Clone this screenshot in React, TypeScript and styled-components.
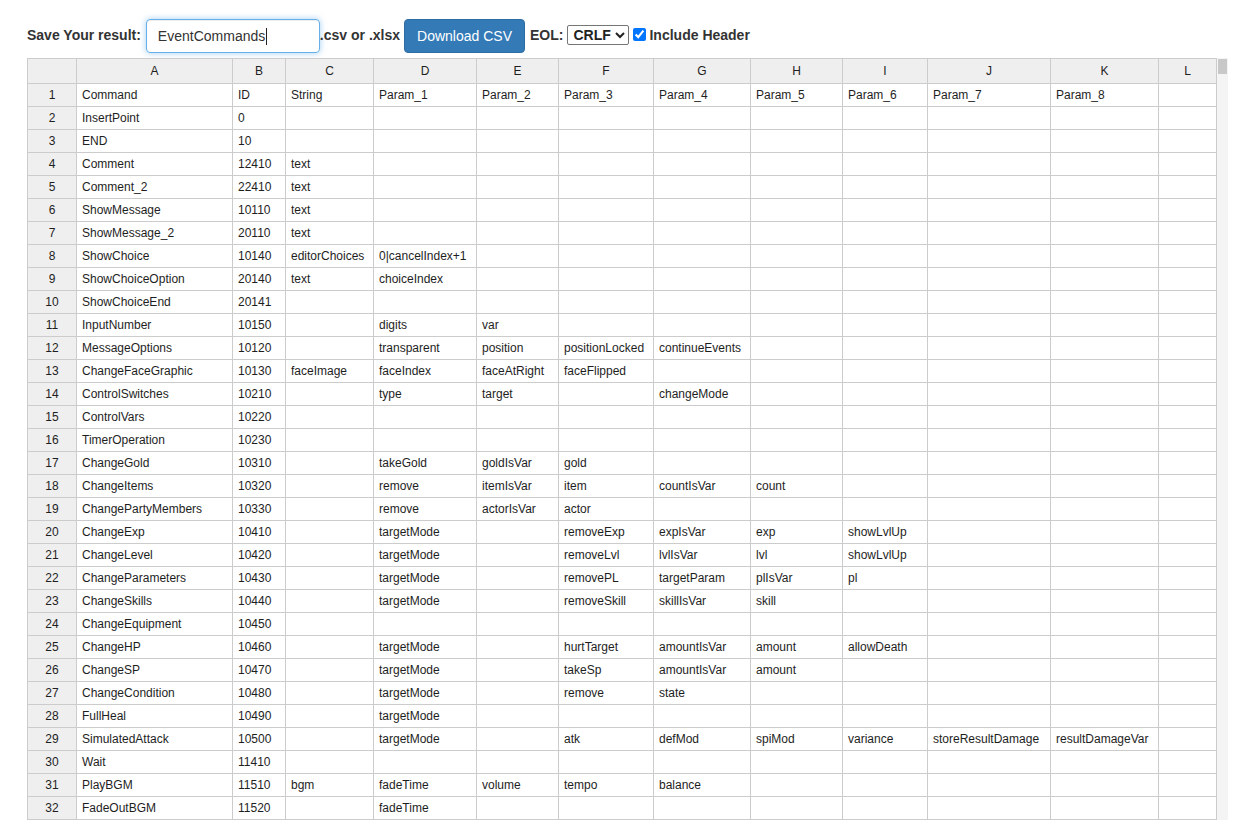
import React from "react"
import styled, { createGlobalStyle } from "styled-components"

const GlobalStyle = createGlobalStyle`
  html, body {
    margin: 0;
    padding: 0;
    background: #fff;
    overflow: hidden;
  }
  body {
    font-family: "Liberation Sans", Arial, Helvetica, sans-serif;
    color: #333;
  }
`

const Page = styled.div`
  height: 100vh;
  padding: 19px 0 0 27px;
  box-sizing: border-box;
  display: flex;
  flex-direction: column;
  overflow: hidden;
`

const Toolbar = styled.div`
  display: flex;
  align-items: center;
  height: 34px;
  margin-bottom: 5px;
`

const Label = styled.span<{ $gap?: number }>`
  font-size: 14px;
  font-weight: bold;
  color: #333;
  margin-left: ${(p) => p.$gap ?? 0}px;
  margin-top: -2px;
  white-space: nowrap;
`

const FileNameBox = styled.div`
  width: 174px;
  height: 34px;
  box-sizing: border-box;
  margin-left: 5px;
  padding: 0 12px 0 11px;
  display: flex;
  align-items: center;
  border: 1px solid #66afe9;
  border-radius: 4px;
  box-shadow: inset 0 1px 1px rgba(0, 0, 0, 0.075), 0 0 6px rgba(102, 175, 233, 0.6);
  font-size: 14px;
  color: #333;
`

const Caret = styled.span`
  display: inline-block;
  width: 1px;
  height: 17px;
  background: #222;
  margin-left: 1px;
`

const DownloadButton = styled.button`
  height: 34px;
  width: 121px;
  margin-left: 4px;
  padding: 0 12px;
  border: 1px solid #2e6da4;
  border-radius: 4px;
  background: #337ab7;
  color: #fff;
  font-family: "Liberation Sans", Arial, sans-serif;
  font-size: 14px;
  cursor: pointer;
`

const EolSelect = styled.select`
  width: 62px;
  height: 20px;
  margin-left: 4px;
  margin-top: -3px;
  padding: 0 1px;
  border: 1px solid #767676;
  border-radius: 2px;
  background: #fff;
  color: #222;
  font-family: "Liberation Sans", Arial, sans-serif;
  font-size: 14px;
  font-weight: bold;
`

const HeaderCheck = styled.input`
  width: 13px;
  height: 13px;
  margin: -3px 3px 0 4px;
  accent-color: #0075ff;
`

const GridArea = styled.div`
  flex: 1;
  display: flex;
  align-items: stretch;
  min-height: 0;
  overflow: hidden;
`

const Sheet = styled.table`
  border-collapse: collapse;
  table-layout: fixed;
  width: 1189px;
  font-family: "Liberation Sans", Arial, sans-serif;
  font-size: 12px;
  color: #1e1e1e;
  align-self: flex-start;
`

const HeadCell = styled.th`
  height: 24px;
  padding: 0;
  background: #efefef;
  border: 1px solid #ccc;
  font-weight: normal;
  text-align: center;
  color: #1e1e1e;
`

const RowNum = styled.td`
  height: 22px;
  padding: 0;
  background: #efefef;
  border: 1px solid #ccc;
  text-align: center;
`

const Cell = styled.td`
  height: 22px;
  padding: 0 5px;
  border: 1px solid #ccc;
  white-space: nowrap;
  overflow: hidden;
`

const ScrollTrack = styled.div`
  width: 11px;
  background: #f4f4f4;
  display: flex;
  flex-direction: column;
  align-items: center;
`

const ScrollThumb = styled.div`
  width: 9px;
  height: 15px;
  margin-top: 1px;
  background: #c8c8c8;
`

const colWidths = [49, 156, 53, 88, 103, 82, 95, 97, 92, 85, 123, 108, 58]
const letters = ["A", "B", "C", "D", "E", "F", "G", "H", "I", "J", "K", "L"]

const rows: string[][] = [
  ["Command", "ID", "String", "Param_1", "Param_2", "Param_3", "Param_4", "Param_5", "Param_6", "Param_7", "Param_8"],
  ["InsertPoint", "0"],
  ["END", "10"],
  ["Comment", "12410", "text"],
  ["Comment_2", "22410", "text"],
  ["ShowMessage", "10110", "text"],
  ["ShowMessage_2", "20110", "text"],
  ["ShowChoice", "10140", "editorChoices", "0|cancelIndex+1"],
  ["ShowChoiceOption", "20140", "text", "choiceIndex"],
  ["ShowChoiceEnd", "20141"],
  ["InputNumber", "10150", "", "digits", "var"],
  ["MessageOptions", "10120", "", "transparent", "position", "positionLocked", "continueEvents"],
  ["ChangeFaceGraphic", "10130", "faceImage", "faceIndex", "faceAtRight", "faceFlipped"],
  ["ControlSwitches", "10210", "", "type", "target", "", "changeMode"],
  ["ControlVars", "10220"],
  ["TimerOperation", "10230"],
  ["ChangeGold", "10310", "", "takeGold", "goldIsVar", "gold"],
  ["ChangeItems", "10320", "", "remove", "itemIsVar", "item", "countIsVar", "count"],
  ["ChangePartyMembers", "10330", "", "remove", "actorIsVar", "actor"],
  ["ChangeExp", "10410", "", "targetMode", "", "removeExp", "expIsVar", "exp", "showLvlUp"],
  ["ChangeLevel", "10420", "", "targetMode", "", "removeLvl", "lvlIsVar", "lvl", "showLvlUp"],
  ["ChangeParameters", "10430", "", "targetMode", "", "removePL", "targetParam", "plIsVar", "pl"],
  ["ChangeSkills", "10440", "", "targetMode", "", "removeSkill", "skillIsVar", "skill"],
  ["ChangeEquipment", "10450"],
  ["ChangeHP", "10460", "", "targetMode", "", "hurtTarget", "amountIsVar", "amount", "allowDeath"],
  ["ChangeSP", "10470", "", "targetMode", "", "takeSp", "amountIsVar", "amount"],
  ["ChangeCondition", "10480", "", "targetMode", "", "remove", "state"],
  ["FullHeal", "10490", "", "targetMode"],
  ["SimulatedAttack", "10500", "", "targetMode", "", "atk", "defMod", "spiMod", "variance", "storeResultDamage", "resultDamageVar"],
  ["Wait", "11410"],
  ["PlayBGM", "11510", "bgm", "fadeTime", "volume", "tempo", "balance"],
  ["FadeOutBGM", "11520", "", "fadeTime"],
]

export default function App() {
  return (
    <>
      <GlobalStyle />
      <Page>
        <Toolbar>
          <Label>Save Your result:</Label>
          <FileNameBox>
            EventCommands
            <Caret />
          </FileNameBox>
          <Label>.csv or .xlsx</Label>
          <DownloadButton>Download CSV</DownloadButton>
          <Label $gap={5}>EOL:</Label>
          <EolSelect defaultValue="CRLF">
            <option value="CRLF">CRLF</option>
            <option value="LF">LF</option>
          </EolSelect>
          <HeaderCheck type="checkbox" defaultChecked />
          <Label>Include Header</Label>
        </Toolbar>
        <GridArea>
          <Sheet>
            <colgroup>
              {colWidths.map((w, i) => (
                <col key={i} style={{ width: w }} />
              ))}
            </colgroup>
            <thead>
              <tr>
                <HeadCell />
                {letters.map((l) => (
                  <HeadCell key={l}>{l}</HeadCell>
                ))}
              </tr>
            </thead>
            <tbody>
              {rows.map((r, ri) => (
                <tr key={ri}>
                  <RowNum>{ri + 1}</RowNum>
                  {letters.map((_, ci) => (
                    <Cell key={ci}>{r[ci] ?? ""}</Cell>
                  ))}
                </tr>
              ))}
            </tbody>
          </Sheet>
          <ScrollTrack>
            <ScrollThumb />
          </ScrollTrack>
        </GridArea>
      </Page>
    </>
  )
}
